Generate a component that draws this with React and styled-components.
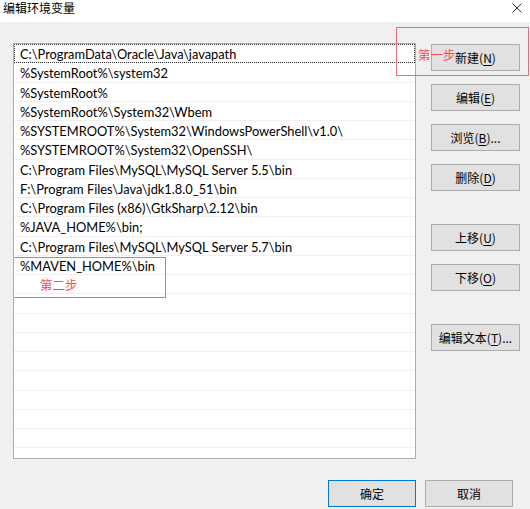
import React from "react";
import styled, { createGlobalStyle } from "styled-components";

const GlobalStyle = createGlobalStyle`
  html, body {
    margin: 0;
    padding: 0;
    background: #f0f0f0;
  }
  body {
    font-family: "Noto Sans", "Noto Sans CJK SC", sans-serif;
  }
`;

const paths = [
  "C:\\ProgramData\\Oracle\\Java\\javapath",
  "%SystemRoot%\\system32",
  "%SystemRoot%",
  "%SystemRoot%\\System32\\Wbem",
  "%SYSTEMROOT%\\System32\\WindowsPowerShell\\v1.0\\",
  "%SYSTEMROOT%\\System32\\OpenSSH\\",
  "C:\\Program Files\\MySQL\\MySQL Server 5.5\\bin",
  "F:\\Program Files\\Java\\jdk1.8.0_51\\bin",
  "C:\\Program Files (x86)\\GtkSharp\\2.12\\bin",
  "%JAVA_HOME%\\bin;",
  "C:\\Program Files\\MySQL\\MySQL Server 5.7\\bin",
  "%MAVEN_HOME%\\bin",
];

const TOTAL_ROWS = 22;

const groups = [
  [
    ["新建", "N"],
    ["编辑", "E"],
    ["浏览", "B", "..."],
    ["删除", "D"],
  ],
  [
    ["上移", "U"],
    ["下移", "O"],
  ],
  [["编辑文本", "T", "..."]],
];

export default function App() {
  const rows = [];
  for (let i = 0; i < TOTAL_ROWS; i++) rows.push(paths[i] || "");

  return (
    <Dialog>
      <GlobalStyle />
      <TitleBar>
        <Title>编辑环境变量</Title>
        <CloseIcon viewBox="0 0 10 10">
          <path d="M0.5 0.5 L9.5 9.5 M9.5 0.5 L0.5 9.5" />
        </CloseIcon>
      </TitleBar>
      <Body>
        <Main>
          <List>
            {rows.map((text, i) => (
              <Row key={i} $focused={i === 0}>
                {text}
              </Row>
            ))}
            {/* annotation around the new entry */}
            <Mark $left={-2} $top={213} $width={154} $height={41}>
              <MarkText $left={27} $top={20}>第二步</MarkText>
            </Mark>
          </List>
          <Side>
            {groups.map((group, gi) => (
              <Group key={gi}>
                {group.map(([label, key, tail]) => (
                  <Button key={label}>
                    {label}(<u>{key}</u>){tail}
                  </Button>
                ))}
              </Group>
            ))}
          </Side>
        </Main>
        <Footer>
          <Button $primary $wide>确定</Button>
          <Button $wide>取消</Button>
        </Footer>
        <Mark $left={396} $top={5} $width={133} $height={49}>
          <MarkText $left={21} $top={20}>第一步</MarkText>
        </Mark>
      </Body>
    </Dialog>
  );
}

const Dialog = styled.div`
  width: 530px;
  height: 509px;
  background: #f0f0f0;
  overflow: hidden;
  display: flex;
  flex-direction: column;
`;

const TitleBar = styled.div`
  height: 22px;
  background: #ffffff;
  display: flex;
  align-items: flex-start;
  justify-content: space-between;
  padding: 0 8px 0 3px;
  box-sizing: border-box;
`;

const Title = styled.div`
  font-family: "Noto Sans CJK SC", sans-serif;
  font-size: 12px;
  line-height: 16px;
  color: #000;
`;

const CloseIcon = styled.svg`
  width: 10px;
  height: 10px;
  margin-top: 3px;
  fill: none;
  stroke: #333;
  stroke-width: 1;
`;

const Body = styled.div`
  position: relative;
  flex: 1;
  padding: 21px 0 0 13px;
  box-sizing: border-box;
  display: flex;
  flex-direction: column;
`;

const Main = styled.div`
  display: flex;
  gap: 15px;
`;

const List = styled.div`
  position: relative;
  width: 403px;
  height: 416px;
  box-sizing: border-box;
  border: 1px solid #adadad;
  background: #ffffff;
  overflow: hidden;
`;

const Row = styled.div`
  height: 19.25px;
  box-sizing: border-box;
  padding: 1px 0 0 6px;
  border-bottom: 1px solid #f0f0f0;
  font-family: Lato, "Noto Sans", sans-serif;
  font-size: 12.85px;
  line-height: 18px;
  color: #000;
  white-space: nowrap;
  outline: ${(p) => (p.$focused ? "1px dotted #333" : "none")};
  outline-offset: -1px;
`;

const Side = styled.div`
  display: flex;
  flex-direction: column;
  gap: 33px;
  padding-top: 1px;
`;

const Group = styled.div`
  display: flex;
  flex-direction: column;
  gap: 13px;
`;

const Button = styled.button`
  width: ${(p) => (p.$wide ? "88px" : "89px")};
  height: 27px;
  box-sizing: border-box;
  background: #e1e1e1;
  border: 1px solid ${(p) => (p.$primary ? "#0078d7" : "#adadad")};
  font-family: "Noto Sans CJK SC", "Noto Sans", sans-serif;
  font-size: 12px;
  color: #000;
  padding: 0;
  display: flex;
  align-items: center;
  justify-content: center;

  u {
    text-underline-offset: 2px;
  }
`;

const Footer = styled.div`
  display: flex;
  justify-content: flex-end;
  gap: 9px;
  padding-right: 17px;
  margin-top: 21px;
`;

const Mark = styled.div`
  position: absolute;
  left: ${(p) => p.$left}px;
  top: ${(p) => p.$top}px;
  width: ${(p) => p.$width}px;
  height: ${(p) => p.$height}px;
  box-sizing: border-box;
  border: 1px solid #ee6f6f;
  pointer-events: none;
`;

const MarkText = styled.span`
  position: absolute;
  left: ${(p) => p.$left}px;
  top: ${(p) => p.$top}px;
  font-family: "Noto Sans CJK SC", sans-serif;
  font-size: 12.5px;
  line-height: 14px;
  color: #ff4a4a;
  white-space: nowrap;
`;
